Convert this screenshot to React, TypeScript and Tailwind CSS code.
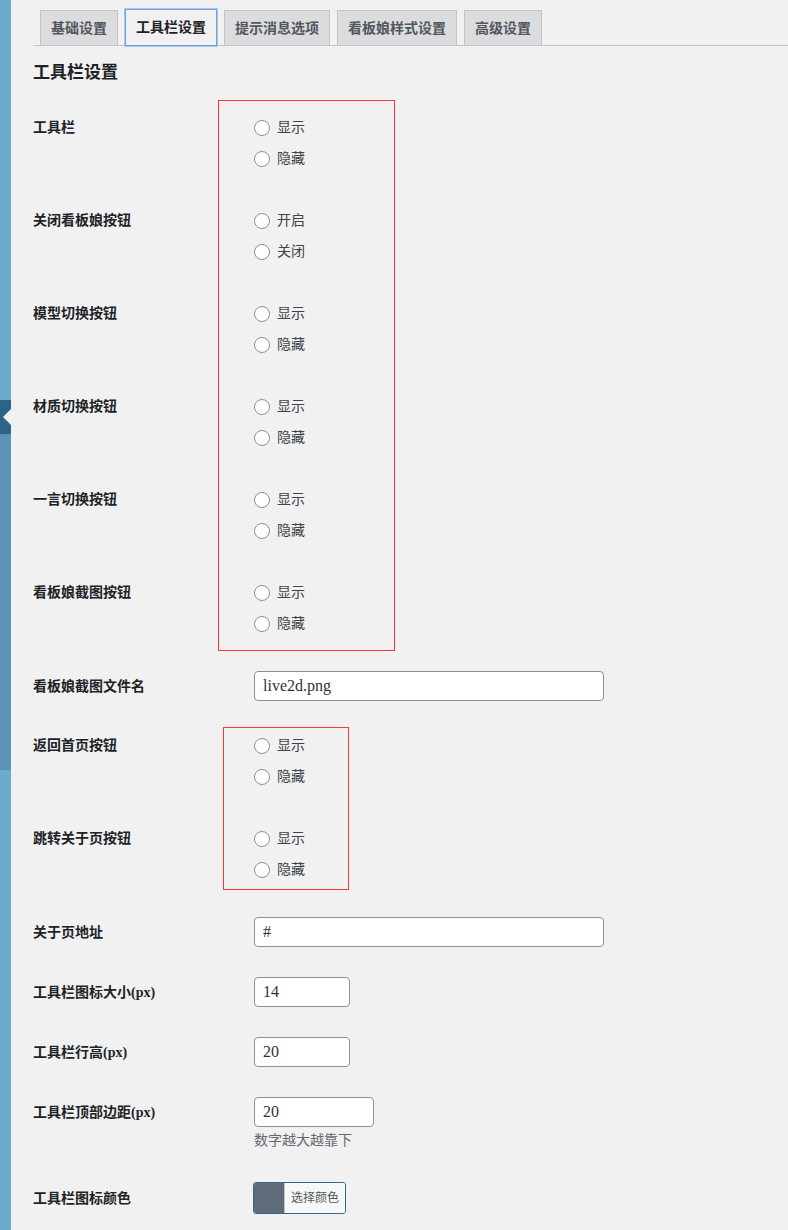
const tabs = ['基础设置', '工具栏设置', '提示消息选项', '看板娘样式设置', '高级设置'];

const groupOne = [
  { label: '工具栏', options: ['显示', '隐藏'] },
  { label: '关闭看板娘按钮', options: ['开启', '关闭'] },
  { label: '模型切换按钮', options: ['显示', '隐藏'] },
  { label: '材质切换按钮', options: ['显示', '隐藏'] },
  { label: '一言切换按钮', options: ['显示', '隐藏'] },
  { label: '看板娘截图按钮', options: ['显示', '隐藏'] },
];

const groupTwo = [
  { label: '返回首页按钮', options: ['显示', '隐藏'] },
  { label: '跳转关于页按钮', options: ['显示', '隐藏'] },
];

const Radio = ({ name, text }: { name: string; text: string }) => (
  <label className="flex h-[31px] items-center gap-[7px] text-[14px] text-[#3c434a]">
    <input
      type="radio"
      name={name}
      className="m-0 h-4 w-4 appearance-none rounded-full border border-[#8c8f94] bg-white"
    />
    <span>{text}</span>
  </label>
);

const Label = ({ children }: { children: React.ReactNode }) => (
  <div className="flex h-[31px] items-center text-[14px] font-semibold text-[#1d2327]">{children}</div>
);

const TextInput = ({ value, width }: { value: string; width: string }) => (
  <input
    defaultValue={value}
    className={`h-[30px] ${width} rounded-[4px] border border-[#8c8f94] bg-white px-[8px] text-[16px] text-[#2c3338] outline-none`}
  />
);

const App = () => {
  return (
    <div
      className="flex min-h-[1230px] bg-[#f1f1f1]"
      style={{ fontFamily: '"Liberation Serif", "Noto Sans CJK SC", serif' }}
    >
      {/* admin menu strip */}
      <aside className="flex w-[11px] shrink-0 flex-col">
        <div className="h-[400px] bg-[#6aaacb]" />
        <div className="flex h-[34px] items-center justify-end bg-[#2d6384]">
          <div className="h-0 w-0 border-y-[8px] border-r-[8px] border-y-transparent border-r-[#f1f1f1]" />
        </div>
        <div className="h-[336px] bg-[#5a93b3]" />
        <div className="flex-1 bg-[#6aaacb]" />
      </aside>

      <main className="flex-1 pl-[22px]">
        <nav className="flex h-[46px] items-end border-b border-[#c3c4c7] pt-[10px]">
          {tabs.map((tab, i) =>
            i === 1 ? (
              <button
                key={tab}
                className="-mb-px ml-[7px] h-[37px] border border-[#6fa3dd] bg-[#f0f0f1] px-[10px] text-[14px] font-semibold text-[#1d2327] shadow-[0_0_0_1px_#a9c8ee]"
              >
                {tab}
              </button>
            ) : (
              <button
                key={tab}
                className="-mb-px ml-[7px] h-[36px] border border-[#c3c4c7] bg-[#dcdcde] px-[10px] text-[14px] font-semibold text-[#50575e]"
              >
                {tab}
              </button>
            )
          )}
        </nav>

        <h2 className="mt-[15px] h-[24px] text-[17px] leading-[24px] font-semibold text-[#1d2327]">工具栏设置</h2>

        <div className="mt-[15px] flex">
          <div className="w-[185px] pt-[12px]">
            <div className="flex flex-col gap-[62px]">
              {groupOne.map((g) => (
                <Label key={g.label}>{g.label}</Label>
              ))}
            </div>
          </div>
          <div className="w-[177px] border border-[#ff3434] py-[11px] pl-[35px]">
            <div className="flex flex-col gap-[31px]">
              {groupOne.map((g, i) => (
                <div key={g.label}>
                  {g.options.map((o) => (
                    <Radio key={o} name={`a${i}`} text={o} />
                  ))}
                </div>
              ))}
            </div>
          </div>
        </div>

        <div className="mt-[20px] flex items-center">
          <div className="w-[221px] text-[14px] font-semibold text-[#1d2327]">看板娘截图文件名</div>
          <TextInput value="live2d.png" width="w-[350px]" />
        </div>

        <div className="mt-[26px] flex">
          <div className="w-[190px] pt-[3px]">
            <div className="flex flex-col gap-[62px]">
              {groupTwo.map((g) => (
                <Label key={g.label}>{g.label}</Label>
              ))}
            </div>
          </div>
          <div className="w-[126px] border border-[#ff3434] pt-[2px] pb-[4px] pl-[30px]">
            <div className="flex flex-col gap-[31px]">
              {groupTwo.map((g, i) => (
                <div key={g.label}>
                  {g.options.map((o) => (
                    <Radio key={o} name={`b${i}`} text={o} />
                  ))}
                </div>
              ))}
            </div>
          </div>
        </div>

        <div className="mt-[27px] flex flex-col gap-[30px]">
          <div className="flex items-center">
            <div className="w-[221px] text-[14px] font-semibold text-[#1d2327]">关于页地址</div>
            <TextInput value="#" width="w-[350px]" />
          </div>
          <div className="flex items-center">
            <div className="w-[221px] text-[14px] font-semibold text-[#1d2327]">工具栏图标大小(px)</div>
            <TextInput value="14" width="w-[96px]" />
          </div>
          <div className="flex items-center">
            <div className="w-[221px] text-[14px] font-semibold text-[#1d2327]">工具栏行高(px)</div>
            <TextInput value="20" width="w-[96px]" />
          </div>
          <div className="flex">
            <div className="flex h-[30px] w-[221px] items-center text-[14px] font-semibold text-[#1d2327]">
              工具栏顶部边距(px)
            </div>
            <div>
              <TextInput value="20" width="w-[120px]" />
              <p className="mt-[4px] h-[20px] text-[14px] leading-[20px] text-[#646970]">数字越大越靠下</p>
            </div>
          </div>
        </div>

        <div className="mt-[31px] flex items-center">
          <div className="w-[220px] text-[14px] font-semibold text-[#1d2327]">工具栏图标颜色</div>
          <button className="flex h-[32px] w-[93px] overflow-hidden rounded-[3px] border border-[#2f6a8f]">
            <span className="h-full w-[30px] bg-[#5f6b7a]" />
            <span className="flex h-full flex-1 items-center border-l border-[#c3c4c7] bg-[#f6f7f7] pl-[6px] text-[12px] text-[#50575e]">
              选择颜色
            </span>
          </button>
        </div>
      </main>
    </div>
  );
};

export default App;
